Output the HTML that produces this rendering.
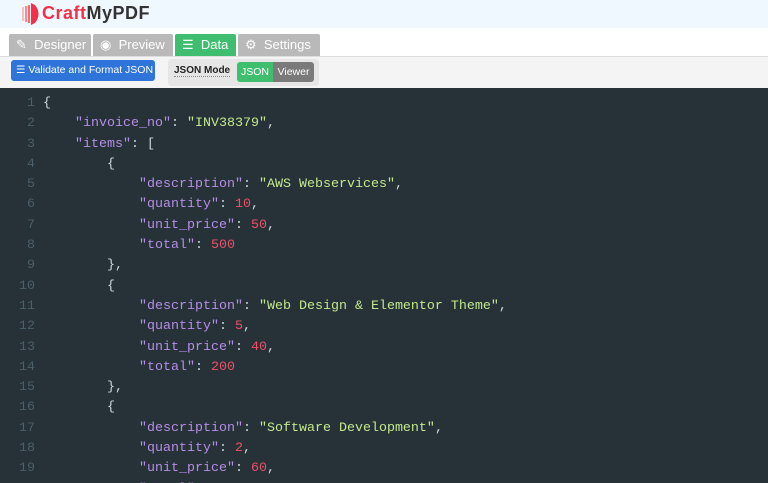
<!DOCTYPE html><html><head><style>
html,body{margin:0;width:768px;height:483px;overflow:hidden}
body{font-family:"Liberation Sans",sans-serif;background:#263238;position:relative}
.top{position:absolute;left:0;top:0;width:768px;height:28px;background:#eff8fe}
.w{position:absolute;top:28px;left:0;width:768px;height:28px;background:#fff;border-bottom:1px solid #ddd}
.tb{position:absolute;top:57px;left:0;width:768px;height:31px;background:#f4f4f4}
.tab{position:absolute;top:34px;height:22px;background:#b9b9b9;color:#fff;font-size:13px;line-height:22px;border-radius:2px 2px 0 0}
.tab span{margin-left:7px}
.ed{position:absolute;top:94px;left:0;height:389px;overflow:hidden;font-family:"Liberation Mono",monospace;font-size:13.33px;line-height:20.3px;color:#cfd8dc;white-space:pre}
.n{display:inline-block;width:35px;text-align:right;color:#4c5f69;margin-right:8px}
.k{color:#b58ee6}.s{color:#c3e88d}.d{color:#f0506a}
</style></head><body>
<div class="top"></div>
<svg style="position:absolute;left:22px;top:2px" width="20" height="24"><rect x="0" y="5" width="2" height="14" fill="#fbb"/><rect x="3" y="4" width="2" height="16" fill="#f88"/><rect x="6" y="3" width="2" height="18" fill="#f66"/><path d="M9 1 L13 3 Q20 12 13 21 L9 23Z" fill="#f33048"/></svg>
<div style="position:absolute;left:42px;top:3px;font-size:18px;font-weight:bold;color:#333;letter-spacing:.5px"><span style="color:#f33048">Craft</span>MyPDF</div>
<div class="w"></div>
<div class="tab" style="left:9px;width:82px"><span>✎ &nbsp;Designer</span></div>
<div class="tab" style="left:93px;width:80px"><span>◉ &nbsp;Preview</span></div>
<div class="tab" style="left:175px;width:61px;background:#3fbe6f"><span>☰ &nbsp;Data</span></div>
<div class="tab" style="left:238px;width:82px"><span>⚙ &nbsp;Settings</span></div>
<div class="tb"></div>
<div style="position:absolute;left:11px;top:60px;width:144px;height:21px;background:#2f74d8;border-radius:3px;color:#fff;font-size:10.5px;line-height:21px"><span style="margin-left:5px">☰</span> Validate and Format JSON</div>
<div style="position:absolute;left:168px;top:59px;width:151px;height:27px;background:#e6e6e6;border-radius:3px"></div>
<div style="position:absolute;left:174px;top:65px;font-size:10px;font-weight:bold;color:#222;border-bottom:1px dotted #888">JSON Mode</div>
<div style="position:absolute;left:237px;top:62px;width:36px;height:20px;background:#3fbe6f;border-radius:3px 0 0 3px;color:#fff;font-size:10.5px;line-height:20px;text-align:center">JSON</div>
<div style="position:absolute;left:273px;top:62px;width:41px;height:20px;background:#7a7a7a;border-radius:0 3px 3px 0;color:#fff;font-size:10.5px;line-height:20px;text-align:center">Viewer</div>
<div class="ed"><span class="n">1</span>{
<span class="n">2</span>    <span class="k">"invoice_no"</span>: <span class="s">"INV38379"</span>,
<span class="n">3</span>    <span class="k">"items"</span>: [
<span class="n">4</span>        {
<span class="n">5</span>            <span class="k">"description"</span>: <span class="s">"AWS Webservices"</span>,
<span class="n">6</span>            <span class="k">"quantity"</span>: <span class="d">10</span>,
<span class="n">7</span>            <span class="k">"unit_price"</span>: <span class="d">50</span>,
<span class="n">8</span>            <span class="k">"total"</span>: <span class="d">500</span>
<span class="n">9</span>        },
<span class="n">10</span>        {
<span class="n">11</span>            <span class="k">"description"</span>: <span class="s">"Web Design &amp; Elementor Theme"</span>,
<span class="n">12</span>            <span class="k">"quantity"</span>: <span class="d">5</span>,
<span class="n">13</span>            <span class="k">"unit_price"</span>: <span class="d">40</span>,
<span class="n">14</span>            <span class="k">"total"</span>: <span class="d">200</span>
<span class="n">15</span>        },
<span class="n">16</span>        {
<span class="n">17</span>            <span class="k">"description"</span>: <span class="s">"Software Development"</span>,
<span class="n">18</span>            <span class="k">"quantity"</span>: <span class="d">2</span>,
<span class="n">19</span>            <span class="k">"unit_price"</span>: <span class="d">60</span>,
<span class="n">20</span>            <span class="k">"total"</span>: <span class="d">120</span>
</div>
</body></html>
